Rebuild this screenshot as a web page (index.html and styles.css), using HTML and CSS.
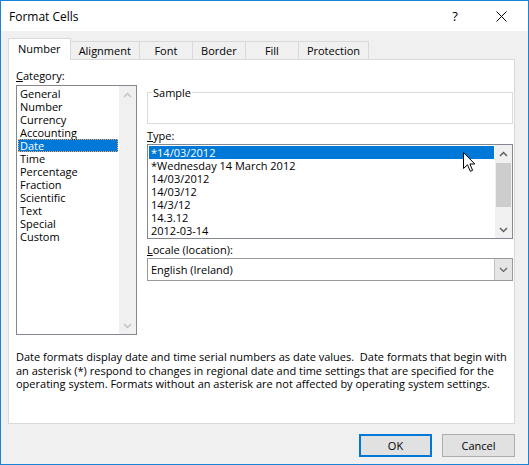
FILE: index.html
```html
<!DOCTYPE html>
<html>
<head>
<meta charset="utf-8">
<link rel="stylesheet" href="styles.css">
</head>
<body>
<div class="dialog">
  <div class="titlebar">
    <span class="title">Format Cells</span>
    <span class="tbtn help">?</span>
    <span class="tbtn close"><svg width="11" height="11" viewBox="0 0 11 11"><path d="M0.5 0.5 L10.5 10.5 M10.5 0.5 L0.5 10.5" stroke="#000" stroke-width="1" fill="none"/></svg></span>
  </div>
  <div class="body">
    <div class="tabs">
      <div class="tab active">Number</div>
      <div class="tab">Alignment</div>
      <div class="tab">Font</div>
      <div class="tab">Border</div>
      <div class="tab">Fill</div>
      <div class="tab">Protection</div>
    </div>
    <div class="panel">
      <div class="cols">
        <div class="leftcol">
          <div class="label"><u>C</u>ategory:</div>
          <div class="listbox cat">
            <ul class="items">
              <li>General</li>
              <li>Number</li>
              <li>Currency</li>
              <li>Accounting</li>
              <li class="sel focus">Date</li>
              <li>Time</li>
              <li>Percentage</li>
              <li>Fraction</li>
              <li>Scientific</li>
              <li>Text</li>
              <li>Special</li>
              <li>Custom</li>
            </ul>
            <div class="vscroll disabled">
              <span class="arrow"><svg width="9" height="6" viewBox="0 0 9 6"><path d="M1 5 L4.5 1.5 L8 5" stroke="#c2c2c2" stroke-width="1.5" fill="none"/></svg></span>
              <span class="track"></span>
              <span class="arrow"><svg width="9" height="6" viewBox="0 0 9 6"><path d="M1 1 L4.5 4.5 L8 1" stroke="#c2c2c2" stroke-width="1.5" fill="none"/></svg></span>
            </div>
          </div>
        </div>
        <div class="rightcol">
          <fieldset class="sample"><legend>Sample</legend></fieldset>
          <div class="label"><u>T</u>ype:</div>
          <div class="listbox type">
            <ul class="items">
              <li class="sel">*14/03/2012</li>
              <li>*Wednesday 14 March 2012</li>
              <li>14/03/2012</li>
              <li>14/03/12</li>
              <li>14/3/12</li>
              <li>14.3.12</li>
              <li>2012-03-14</li>
            </ul>
            <div class="vscroll">
              <span class="arrow"><svg width="9" height="6" viewBox="0 0 9 6"><path d="M1 5 L4.5 1.5 L8 5" stroke="#606060" stroke-width="1.5" fill="none"/></svg></span>
              <span class="track"><span class="thumb"></span></span>
              <span class="arrow"><svg width="9" height="6" viewBox="0 0 9 6"><path d="M1 1 L4.5 4.5 L8 1" stroke="#606060" stroke-width="1.5" fill="none"/></svg></span>
            </div>
          </div>
          <div class="label locale-label"><u>L</u>ocale (location):</div>
          <div class="combo">
            <span class="combo-text">English (Ireland)</span>
            <span class="combo-btn"><svg width="9" height="6" viewBox="0 0 9 6"><path d="M1 1 L4.5 4.5 L8 1" stroke="#606060" stroke-width="1.2" fill="none"/></svg></span>
          </div>
        </div>
      </div>
      <p class="desc">Date formats display date and time serial numbers as date values.&nbsp; Date formats that begin with<br>an asterisk (*) respond to changes in regional date and time settings that are specified for the<br>operating system. Formats without an asterisk are not affected by operating system settings.</p>
    </div>
    <div class="buttons">
      <button class="btn default">OK</button>
      <button class="btn">Cancel</button>
    </div>
  </div>
  <svg class="cursor" width="13" height="21" viewBox="0 0 13 21"><path d="M0.5 0.5 L0.5 16.5 L4.5 12.8 L7.3 19.3 L9.6 18.3 L6.9 12 L11.8 12 Z" fill="#fff" stroke="#000" stroke-width="1" stroke-linejoin="miter"/></svg>
</div>
</body>
</html>
```

FILE: styles.css
```css
html, body {
  margin: 0;
  padding: 0;
}
body {
  font-family: "Open Sans", "Noto Sans", sans-serif;
  font-size: 11px;
  color: #000;
  background: #fff;
}
.dialog {
  width: 529px;
  height: 465px;
  box-sizing: border-box;
  border: 1px solid #1883d7;
  background: #f0f0f0;
  position: relative;
  display: flex;
  flex-direction: column;
}
.titlebar {
  height: 30px;
  background: #fff;
  display: flex;
  align-items: center;
  padding-left: 8px;
}
.title {
  flex: 1;
  font-size: 12px;
}
.tbtn {
  width: 46px;
  height: 30px;
  display: flex;
  align-items: center;
  justify-content: center;
}
.help {
  font-size: 13px;
}
.close {
  margin-right: 4px;
}
.body {
  flex: 1;
  padding: 7px 13px 0 7px;
  display: flex;
  flex-direction: column;
}
.tabs {
  display: flex;
  align-items: flex-end;
  height: 21px;
}
.tab {
  height: 18px;
  box-sizing: border-box;
  border: 1px solid #d9d9d9;
  border-bottom: none;
  margin-right: -1px;
  padding: 0 8px;
  min-width: 54px;
  text-align: center;
  line-height: 18px;
  background: #f0f0f0;
  white-space: nowrap;
}
.tab.active {
  height: 22px;
  margin-bottom: -1px;
  background: #fff;
  position: relative;
  z-index: 1;
  line-height: 20px;
  padding: 0 9px;
}
.panel {
  height: 365px;
  box-sizing: border-box;
  border: 1px solid #d9d9d9;
  background: #fff;
  padding: 9px 1px 0 7px;
}
.cols {
  display: flex;
  gap: 10px;
}
.leftcol {
  width: 121px;
}
.rightcol {
  flex: 1;
  display: flex;
  flex-direction: column;
}
.label {
  line-height: 13px;
  height: 13px;
  margin-bottom: 3px;
  white-space: nowrap;
}
.listbox {
  border: 1px solid #828790;
  display: flex;
  box-sizing: border-box;
  background: #fff;
}
.listbox.cat {
  height: 250px;
}
.listbox.type {
  height: 95px;
}
.items {
  list-style: none;
  margin: 0;
  padding: 1px 1px 0 1px;
  flex: 1;
  overflow: hidden;
}
.items li {
  height: 13px;
  line-height: 13px;
  padding-left: 2px;
  white-space: nowrap;
  box-sizing: border-box;
}
.items li.sel {
  background: #0078d7;
  color: #fff;
}
.items li.focus {
  outline: 1px dotted #f4a460;
  outline-offset: -1px;
}
.vscroll {
  width: 17px;
  background: #f0f0f0;
  display: flex;
  flex-direction: column;
}
.vscroll .arrow {
  height: 17px;
  display: flex;
  align-items: center;
  justify-content: center;
}
.vscroll .track {
  flex: 1;
  display: flex;
  flex-direction: column;
  padding: 0 1px;
}
.thumb {
  display: block;
  height: 44px;
  margin-top: 1px;
  background: #cdcdcd;
}
.sample {
  margin: 17px 0 5px 0;
  padding: 0;
  height: 38px;
  box-sizing: border-box;
  border: 1px solid #dcdcdc;
  min-width: 0;
}
.sample legend {
  margin-left: 4px;
  padding: 0 1px;
  line-height: 13px;
}
.locale-label {
  margin-top: 4px;
  margin-bottom: 2px;
}
.type {
  margin-top: -1px;
}
.combo {
  height: 23px;
  box-sizing: border-box;
  border: 1px solid #999;
  display: flex;
  align-items: stretch;
  background: #fff;
}
.combo-text {
  flex: 1;
  padding-left: 3px;
  line-height: 21px;
}
.combo-btn {
  width: 17px;
  background: #e5e5e5;
  border-left: 1px solid #c4c4c4;
  display: flex;
  align-items: center;
  justify-content: center;
}
.desc {
  margin: 15px 0 0 0;
  line-height: 13.5px;
  white-space: nowrap;
}
.buttons {
  display: flex;
  justify-content: flex-end;
  gap: 10px;
  margin-top: 10px;
}
.btn {
  width: 73px;
  height: 23px;
  box-sizing: border-box;
  border: 1px solid #adadad;
  background: #e1e1e1;
  font: inherit;
  color: #000;
  padding: 0;
}
.btn.default {
  border: 2px solid #0078d7;
}
.cursor {
  position: absolute;
  left: 462px;
  top: 151px;
}
```
